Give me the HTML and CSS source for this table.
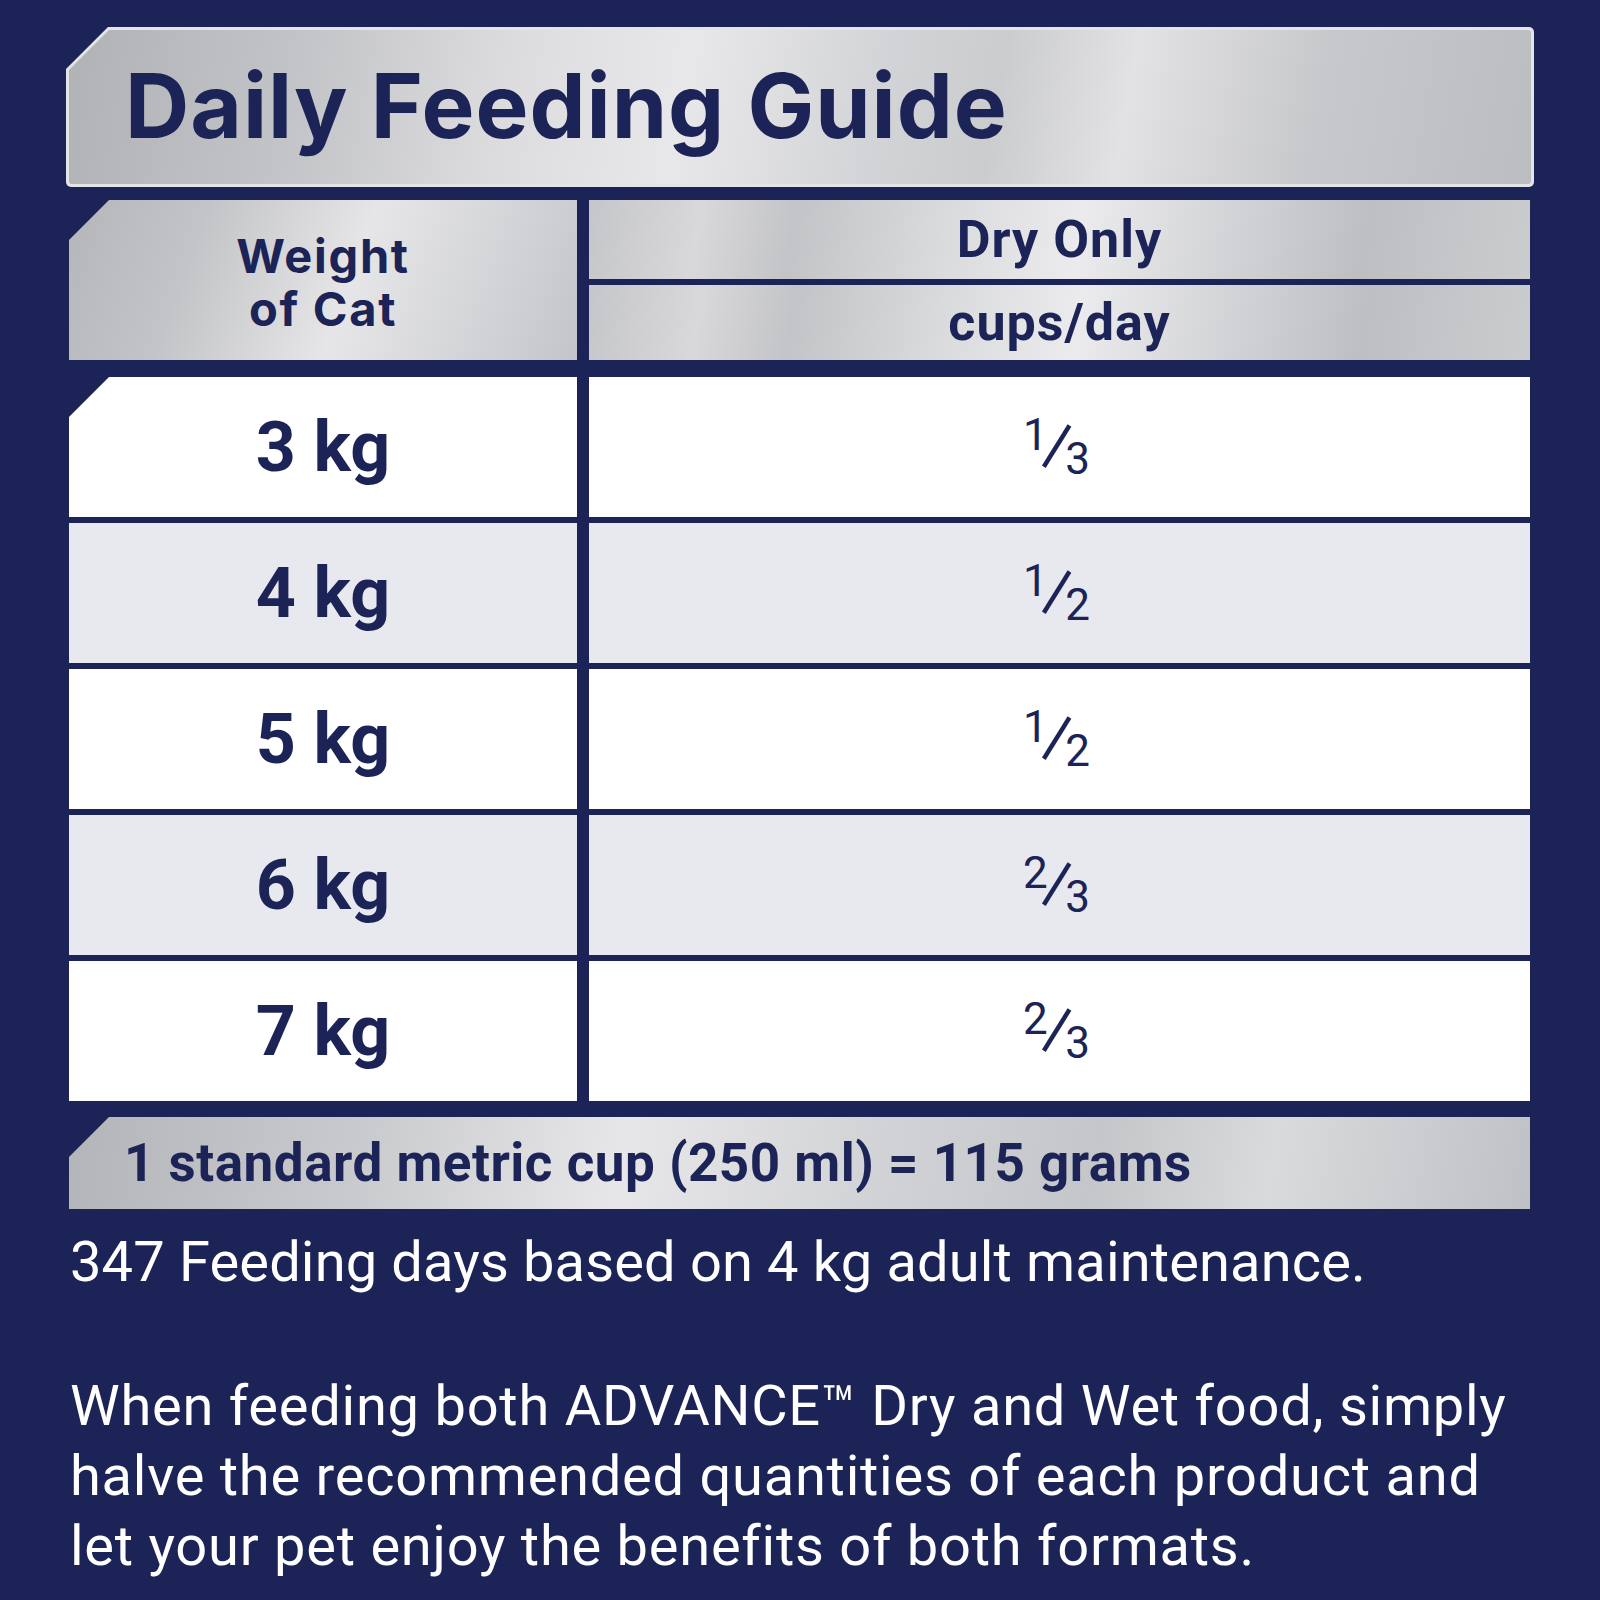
FILE: index.html
```html
<!DOCTYPE html>
<html lang="en">
<head>
<meta charset="utf-8">
<title>Daily Feeding Guide</title>
<link rel="stylesheet" href="styles.css">
</head>
<body>
<div class="page">
  <div class="title-rim">
    <div class="title">
      <h1 class="title-text">Daily Feeding Guide</h1>
    </div>
  </div>

  <div class="thead">
    <div class="hcell hleft cut">Weight<br>of Cat</div>
    <div class="hright">
      <div class="hcell hsub">Dry Only</div>
      <div class="hcell hsub">cups/day</div>
    </div>
  </div>

  <div class="tbody">
    <div class="cell white cut">3 kg</div>
    <div class="cell white"><span class="frac"><span class="num">1</span><span class="sl">⁄</span><span class="den">3</span></span></div>
    <div class="cell grey">4 kg</div>
    <div class="cell grey"><span class="frac"><span class="num">1</span><span class="sl">⁄</span><span class="den">2</span></span></div>
    <div class="cell white">5 kg</div>
    <div class="cell white"><span class="frac"><span class="num">1</span><span class="sl">⁄</span><span class="den">2</span></span></div>
    <div class="cell grey">6 kg</div>
    <div class="cell grey"><span class="frac"><span class="num">2</span><span class="sl">⁄</span><span class="den">3</span></span></div>
    <div class="cell white">7 kg</div>
    <div class="cell white"><span class="frac"><span class="num">2</span><span class="sl">⁄</span><span class="den">3</span></span></div>
  </div>

  <div class="note cut">1 standard metric cup (250 ml) = 115 grams</div>

  <p class="days">347 Feeding days based on 4 kg adult maintenance.</p>

  <p class="para">When feeding both ADVANCE™ Dry and Wet food, simply<br>halve the recommended quantities of each product and<br>let your pet enjoy the benefits of both formats.</p>
</div>
</body>
</html>
```

FILE: styles.css
```css
html, body {
  margin: 0;
  padding: 0;
  background: #1b2357;
}

.page {
  width: 1600px;
  height: 1600px;
  box-sizing: border-box;
  background: #1b2357;
  padding: 27px 0 0 66px;
  font-family: Roboto, "Liberation Sans", sans-serif;
  color: #1b2357;
  overflow: hidden;
}

/* ---------- Title banner ---------- */
.title-rim {
  width: 1468px;
  height: 160px;
  box-sizing: border-box;
  padding: 3px;
  background: #e4e5e8;
  border-radius: 5px;
  clip-path: polygon(42px 0, 100% 0, 100% 100%, 0 100%, 0 42px);
}

.title {
  height: 100%;
  border-radius: 3px;
  display: flex;
  align-items: center;
  padding-left: 56px;
  box-sizing: border-box;
  clip-path: polygon(40px 0, 100% 0, 100% 100%, 0 100%, 0 40px);
  background: linear-gradient(100deg,
    #b1b2b6 0%, #c3c4c7 16%, #dcdcdf 30%, #e8e8ea 42%,
    #d3d4d7 55%, #cbccce 63%, #e2e2e4 72%, #c7c8cb 85%, #bcbdc1 100%);
}

.title-text {
  margin: 0;
  font-family: Inter, Roboto, sans-serif;
  font-weight: 700;
  font-size: 89px;
  letter-spacing: 1px;
  line-height: 1;
  padding-bottom: 3px;
}

/* ---------- Header ---------- */
.thead {
  margin: 13px 0 0 3px;
  width: 1461px;
  height: 160px;
  display: grid;
  grid-template-columns: 508px 941px;
  column-gap: 12px;
}

.hcell {
  display: flex;
  align-items: center;
  justify-content: center;
  text-align: center;
  font-weight: 700;
}

.hleft {
  font-family: Inter, Roboto, sans-serif;
  font-size: 47px;
  letter-spacing: 1.7px;
  line-height: 53px;
  padding-top: 4px;
  box-sizing: border-box;
  background: linear-gradient(110deg, #b5b6ba 0%, #c3c4c7 25%, #e6e6e8 55%, #d3d4d7 80%, #c4c5c8 100%);
}

.hright {
  display: flex;
  flex-direction: column;
  gap: 6px;
}

.hsub {
  flex: 1;
  font-size: 52px;
  letter-spacing: 1px;
  background: linear-gradient(100deg, #c5c6c9 0%, #d8d8db 12%, #c3c4c7 22%, #dadbdd 38%, #ebebed 52%, #d2d3d6 68%, #bebfc3 82%, #cbccce 100%);
}

.hsub:first-child {
  height: 79px;
  flex: none;
}

/* ---------- Body rows ---------- */
.tbody {
  margin: 17px 0 0 3px;
  width: 1461px;
  display: grid;
  grid-template-columns: 508px 941px;
  grid-auto-rows: 140px;
  column-gap: 12px;
  row-gap: 6px;
}

.cell {
  display: flex;
  align-items: center;
  justify-content: center;
  font-weight: 700;
  font-size: 70px;
}

.white { background: #ffffff; }
.grey  { background: #e8e9ee; }

.cut {
  clip-path: polygon(40px 0, 100% 0, 100% 100%, 0 100%, 0 40px);
}

.frac {
  font-weight: 400;
  font-size: 44px;
  display: inline-flex;
  align-items: center;
  line-height: 1;
  margin-left: -6px;
}

.num {
  transform: translateY(-12px);
}

.den {
  transform: translateY(12px);
}

.sl {
  font-size: 74px;
  margin: 0 -8px;
}

/* ---------- Footer banner ---------- */
.note {
  margin: 16px 0 0 3px;
  width: 1461px;
  height: 92px;
  box-sizing: border-box;
  display: flex;
  align-items: center;
  padding: 0 0 0 55px;
  font-weight: 700;
  font-size: 53px;
  letter-spacing: 0.5px;
  background: linear-gradient(100deg, #b4b5b9 0%, #c9cacd 20%, #e7e7e9 38%, #d2d3d6 55%, #c5c6c9 70%, #d9dadc 82%, #c0c1c5 100%);
}

/* ---------- Text ---------- */
.days {
  margin: 18px 0 0 4px;
  color: #ffffff;
  font-size: 56px;
  line-height: 70px;
  letter-spacing: 0.15px;
}

.para {
  margin: 74px 0 0 4px;
  color: #ffffff;
  font-size: 56px;
  line-height: 70px;
  letter-spacing: 0.75px;
}
```
